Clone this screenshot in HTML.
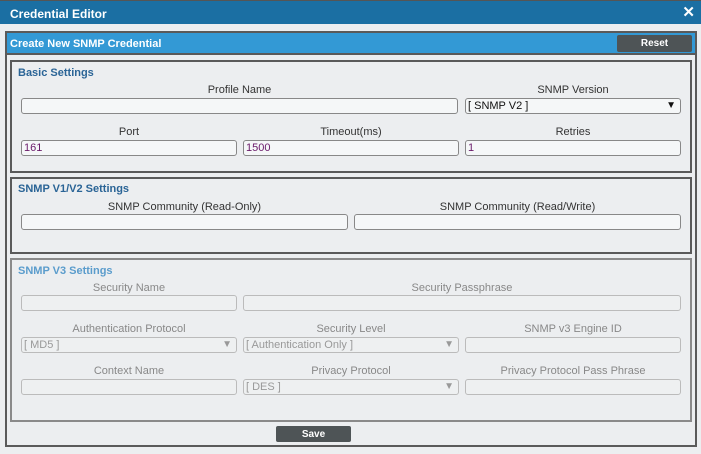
<!DOCTYPE html>
<html><head><style>
*{box-sizing:border-box;margin:0;padding:0}
body{width:701px;height:454px;background:#eceef0;font-family:"Liberation Sans",Arial,sans-serif;position:relative;overflow:hidden;font-size:11px;color:#333}
.a{position:absolute}
.title{left:0;top:0;width:701px;height:24px;background:#1b6fa3;color:#fff;font-weight:bold;font-size:12px;line-height:26px;padding-left:10px;border-top:1px solid #555}
.x{right:6px;top:3px;color:#fff;font-weight:bold;font-size:15px}
.outer{left:5px;top:31px;width:692px;height:416px;border:2px solid #5a5a5a}
.hdr{left:7px;top:33px;width:688px;height:22px;background:#3399d5;color:#fff;font-weight:bold;font-size:11px;line-height:22px;padding-left:3px;border-bottom:2px solid #5a5a5a}
.btn{background:#4e5456;color:#fff;font-weight:bold;font-size:10px;display:flex;align-items:center;justify-content:center;border-radius:2px}
.fs{left:10px;width:682px;border:2px solid #5a5a5a}
.lg{font-weight:bold;color:#2a6496;font-size:11px;left:18px}
.lb{text-align:center;font-size:11px;color:#333}
.in{height:16px;border:1px solid #888;border-radius:3px;background:#f5f7f8;font-size:11px;line-height:14px;padding-left:2px;color:#6a1a6a}
.d .in{border-color:#bbb;background:#eef0f1;color:#999}
.d .lb{color:#888}
.arr{float:right;margin-right:4px;font-size:10px;color:#111}
.d .arr{color:#999}
</style></head><body>
<div class="a title">Credential Editor</div><div class="a x">✕</div>
<div class="a outer"></div>
<div class="a hdr">Create New SNMP Credential</div>
<div class="a btn" style="left:617px;top:35px;width:75px;height:17px">Reset</div>

<div class="a fs" style="top:60px;height:113px"></div>
<div class="a lg" style="top:67px">Basic Settings</div>
<div class="a lb" style="left:21px;top:84px;width:437px">Profile Name</div>
<div class="a lb" style="left:465px;top:84px;width:216px">SNMP Version</div>
<div class="a in" style="left:21px;top:98px;width:437px"></div>
<div class="a in" style="left:465px;top:98px;width:216px;color:#111">[ SNMP V2 ]<span class="arr">▼</span></div>
<div class="a lb" style="left:21px;top:126px;width:216px">Port</div>
<div class="a lb" style="left:243px;top:126px;width:216px">Timeout(ms)</div>
<div class="a lb" style="left:465px;top:126px;width:216px">Retries</div>
<div class="a in" style="left:21px;top:140px;width:216px">161</div>
<div class="a in" style="left:243px;top:140px;width:216px">1500</div>
<div class="a in" style="left:465px;top:140px;width:216px">1</div>

<div class="a fs" style="top:177px;height:77px"></div>
<div class="a lg" style="top:183px">SNMP V1/V2 Settings</div>
<div class="a lb" style="left:21px;top:201px;width:327px">SNMP Community (Read-Only)</div>
<div class="a lb" style="left:354px;top:201px;width:327px">SNMP Community (Read/Write)</div>
<div class="a in" style="left:21px;top:214px;width:327px"></div>
<div class="a in" style="left:354px;top:214px;width:327px"></div>

<div class="d">
<div class="a fs" style="top:258px;height:164px;border-color:#8a8a8a"></div>
<div class="a lg" style="top:265px;color:#5a9ccc">SNMP V3 Settings</div>
<div class="a lb" style="left:21px;top:282px;width:216px">Security Name</div>
<div class="a lb" style="left:243px;top:282px;width:438px">Security Passphrase</div>
<div class="a in" style="left:21px;top:295px;width:216px"></div>
<div class="a in" style="left:243px;top:295px;width:438px"></div>
<div class="a lb" style="left:21px;top:323px;width:216px">Authentication Protocol</div>
<div class="a lb" style="left:243px;top:323px;width:216px">Security Level</div>
<div class="a lb" style="left:465px;top:323px;width:216px">SNMP v3 Engine ID</div>
<div class="a in" style="left:21px;top:337px;width:216px">[ MD5 ]<span class="arr">▼</span></div>
<div class="a in" style="left:243px;top:337px;width:216px">[ Authentication Only ]<span class="arr">▼</span></div>
<div class="a in" style="left:465px;top:337px;width:216px"></div>
<div class="a lb" style="left:21px;top:365px;width:216px">Context Name</div>
<div class="a lb" style="left:243px;top:365px;width:216px">Privacy Protocol</div>
<div class="a lb" style="left:465px;top:365px;width:216px">Privacy Protocol Pass Phrase</div>
<div class="a in" style="left:21px;top:379px;width:216px"></div>
<div class="a in" style="left:243px;top:379px;width:216px">[ DES ]<span class="arr">▼</span></div>
<div class="a in" style="left:465px;top:379px;width:216px"></div>
</div>
<div class="a btn" style="left:276px;top:426px;width:75px;height:16px">Save</div>
</body></html>
